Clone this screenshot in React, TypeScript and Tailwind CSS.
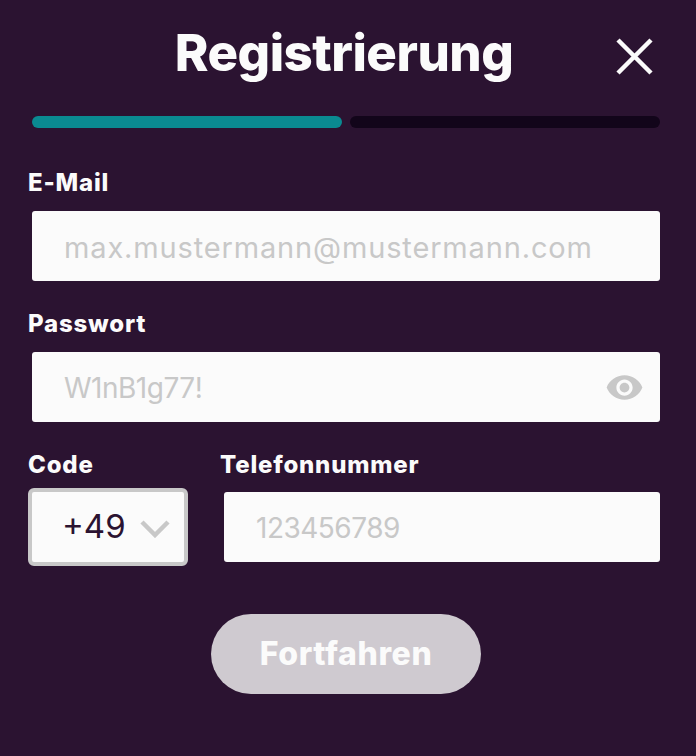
const LABEL = "text-[24px] leading-[30px] font-extrabold text-[#fbfbfb] tracking-[0.8px]"
const INPUT =
  "h-[70px] w-full rounded-[3px] bg-[#fbfbfb] pl-[32px] pr-4 pt-[2px] font-normal text-[#2b1331] outline-none placeholder:text-[#c8c8c8]"

export default function App() {
  return (
    <div className="flex h-[756px] w-[696px] flex-col bg-[#2b1331] pl-[32px] pr-[36px] [font-family:Inter,sans-serif]">
      {/* Header */}
      <div className="relative mt-[20px] flex h-[66px] items-center justify-center">
        <h1 className="ml-[-4px] text-[51px] font-extrabold tracking-[-0.5px] text-[#fbfbfb]">Registrierung</h1>
        <button className="absolute right-[7px] top-[18px] text-[#fbfbfb]">
          <svg width="37" height="37" viewBox="0 0 37 37" fill="none" stroke="currentColor" strokeWidth="4.5">
            <path d="M2 2 35 35M35 2 2 35" />
          </svg>
        </button>
      </div>

      {/* Progress */}
      <div className="mt-[30px] flex gap-2">
        <div className="h-3 flex-1 rounded-full bg-[#0a8a91]" />
        <div className="h-3 flex-1 rounded-full bg-[#12051a]" />
      </div>

      {/* Form */}
      <form className="mt-[40px] flex flex-1 flex-col">
        <label className={`-ml-1 ${LABEL}`}>E-Mail</label>
        <input className={`mt-[13px] text-[29px] tracking-[0.85px] ${INPUT}`} placeholder="max.mustermann@mustermann.com" />

        <label className={`-ml-1 mt-[28px] ${LABEL}`}>Passwort</label>
        <div className="relative mt-[13px]">
          <input className={`text-[28px] tracking-[-0.5px] ${INPUT}`} placeholder="W1nB1g77!" />
          <svg
            className="absolute right-[16px] top-[16px] text-[#c8c8c8]"
            width="39"
            height="39"
            viewBox="0 0 24 24"
            fill="currentColor"
          >
            <path d="M12 4.5C7 4.5 2.73 7.61 1 12c1.73 4.39 6 7.5 11 7.5s9.27-3.11 11-7.5c-1.73-4.39-6-7.5-11-7.5zM12 17c-2.76 0-5-2.24-5-5s2.24-5 5-5 5 2.24 5 5-2.24 5-5 5zm0-8c-1.66 0-3 1.34-3 3s1.34 3 3 3 3-1.34 3-3-1.34-3-3-3z" />
          </svg>
        </div>

        <div className="mt-[28px] flex">
          <div className="-ml-1 w-[160px] shrink-0">
            <label className={`block ${LABEL}`}>Code</label>
            <div className="mt-[8px] flex h-[78px] items-center rounded-[6px] border-4 border-[#c8c8c8] bg-[#fbfbfb] pl-[30px]">
              <span className="text-[33px] font-normal text-[#2b1331]">+49</span>
              <svg className="ml-[14px] mt-[3px] text-[#c8c8c8]" width="30" height="18" viewBox="0 0 30 18" fill="none" stroke="currentColor" strokeWidth="4.5">
                <path d="M2 2 15 15 28 2" />
              </svg>
            </div>
          </div>
          <div className="ml-[36px] flex-1">
            <label className={`-ml-1 block ${LABEL}`}>Telefonnummer</label>
            <input className={`mt-[12px] text-[28px] tracking-[-0.5px] ${INPUT}`} placeholder="123456789" />
          </div>
        </div>

        <button
          type="button"
          className="mx-auto mt-[48px] flex h-[80px] w-[270px] items-center justify-center rounded-full bg-[#cfcad0] text-[32px] font-extrabold tracking-[0.6px] text-[#fbfbfb]"
        >
          Fortfahren
        </button>
      </form>
    </div>
  )
}
